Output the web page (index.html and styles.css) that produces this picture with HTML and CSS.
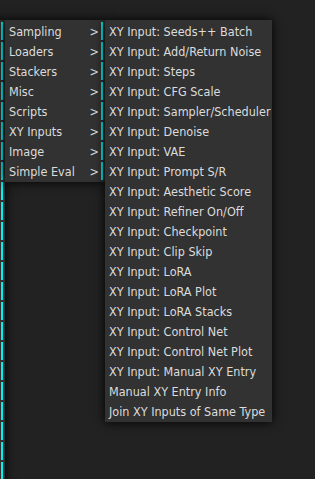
FILE: index.html
```html
<!DOCTYPE html>
<html>
<head>
<meta charset="utf-8">
<link rel="stylesheet" href="styles.css">
</head>
<body>
<div class="canvas">
  <div class="menu menu-parent">
    <div class="entry sub"></div><div class="entry sub"></div><div class="entry sub"></div><div class="entry sub"></div>
    <div class="entry sub"></div><div class="entry sub"></div><div class="entry sub"></div><div class="entry sub"></div>
    <div class="entry sub"></div><div class="entry sub"></div><div class="entry sub"></div><div class="entry sub"></div>
    <div class="entry sub"></div><div class="entry sub"></div><div class="entry sub"></div><div class="entry sub"></div>
    <div class="entry sub"></div><div class="entry sub"></div><div class="entry sub"></div><div class="entry sub"></div>
    <div class="entry sub"></div><div class="entry sub"></div><div class="entry sub"></div><div class="entry sub"></div>
  </div>
  <div class="menu menu-one">
    <div class="entry sub"><span>Sampling</span><span class="arrow">&gt;</span></div>
    <div class="entry sub"><span>Loaders</span><span class="arrow">&gt;</span></div>
    <div class="entry sub"><span>Stackers</span><span class="arrow">&gt;</span></div>
    <div class="entry sub"><span>Misc</span><span class="arrow">&gt;</span></div>
    <div class="entry sub"><span>Scripts</span><span class="arrow">&gt;</span></div>
    <div class="entry sub"><span>XY Inputs</span><span class="arrow">&gt;</span></div>
    <div class="entry sub"><span>Image</span><span class="arrow">&gt;</span></div>
    <div class="entry sub"><span>Simple Eval</span><span class="arrow">&gt;</span></div>
  </div>
  <div class="menu menu-two">
    <div class="entry">XY Input: Seeds++ Batch</div>
    <div class="entry">XY Input: Add/Return Noise</div>
    <div class="entry">XY Input: Steps</div>
    <div class="entry">XY Input: CFG Scale</div>
    <div class="entry">XY Input: Sampler/Scheduler</div>
    <div class="entry">XY Input: Denoise</div>
    <div class="entry">XY Input: VAE</div>
    <div class="entry">XY Input: Prompt S/R</div>
    <div class="entry">XY Input: Aesthetic Score</div>
    <div class="entry">XY Input: Refiner On/Off</div>
    <div class="entry">XY Input: Checkpoint</div>
    <div class="entry">XY Input: Clip Skip</div>
    <div class="entry">XY Input: LoRA</div>
    <div class="entry">XY Input: LoRA Plot</div>
    <div class="entry">XY Input: LoRA Stacks</div>
    <div class="entry">XY Input: Control Net</div>
    <div class="entry">XY Input: Control Net Plot</div>
    <div class="entry">XY Input: Manual XY Entry</div>
    <div class="entry">Manual XY Entry Info</div>
    <div class="entry">Join XY Inputs of Same Type</div>
  </div>
</div>
</body>
</html>
```
FILE: styles.css
```css
html, body {
  margin: 0;
  padding: 0;
  background: #222222;
  overflow: hidden;
}
.canvas {
  position: relative;
  width: 315px;
  height: 479px;
  overflow: hidden;
  background: #222222;
}
.menu {
  position: absolute;
  top: 20px;
  box-sizing: border-box;
  padding: 2px;
  background: #323232;
  box-shadow: 0 0 10px #000;
  display: flex;
  flex-direction: column;
  gap: 2px;
  font-family: "DejaVu Sans Condensed", "DejaVu Sans", sans-serif;
  font-stretch: condensed;
  font-size: 12.5px;
  color: #dcdcdc;
}
.menu-parent {
  left: -95px;
  width: 100px;
  z-index: 1;
}
.menu-one {
  left: 5px;
  width: 100px;
  z-index: 2;
}
.menu-two {
  left: 105px;
  width: 167px;
  z-index: 3;
}
.entry {
  box-sizing: border-box;
  height: 18px;
  padding: 3px 2px 1px 2px;
  line-height: 14px;
  white-space: nowrap;
  display: flex;
  justify-content: space-between;
}
.entry.sub {
  border-right: 2px solid #00f2f2;
}
.arrow {
  display: block;
}
```
